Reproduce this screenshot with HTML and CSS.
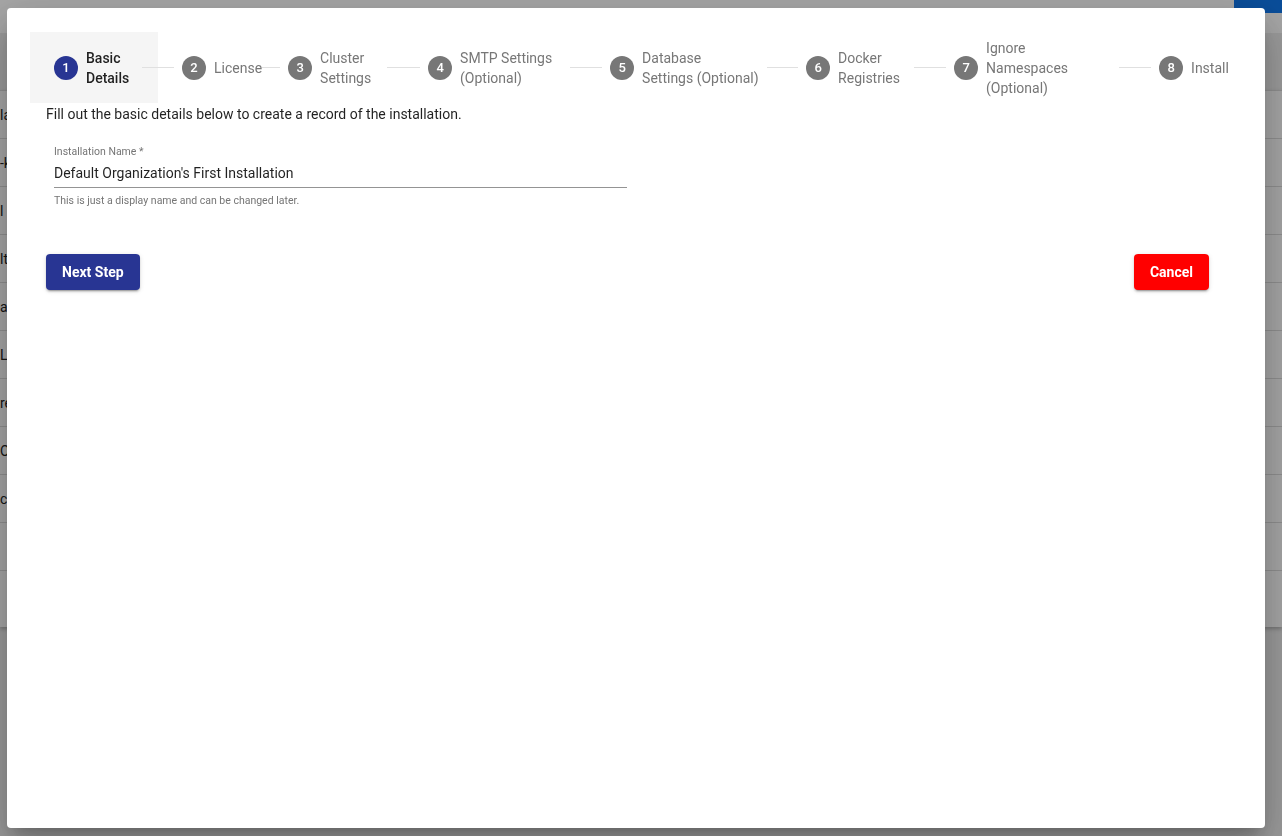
FILE: index.html
```html
<!DOCTYPE html>
<html lang="en">
<head>
<meta charset="utf-8">
<title>New Installation</title>
<link rel="stylesheet" href="styles.css">
</head>
<body>
<div class="page">
  <header class="appbar">
    <div class="appbar-btn"></div>
  </header>
  <div class="page-top"></div>
  <section class="panel">
    <div class="row">label</div>
    <div class="row">-k8s</div>
    <div class="row">l</div>
    <div class="row">lt</div>
    <div class="row">ap</div>
    <div class="row">Lo</div>
    <div class="row">re</div>
    <div class="row">Or</div>
    <div class="row">ce</div>
    <div class="row"></div>
    <div class="panel-footer"></div>
  </section>
</div>

<div class="backdrop"></div>

<div class="dialog" role="dialog">
  <div class="stepper">
    <div class="step step--active">
      <span class="step-icon step-icon--active">1</span>
      <span class="step-label step-label--active w-basic">Basic<br>Details</span>
    </div>
    <div class="connector"></div>
    <div class="step step--tight">
      <span class="step-icon">2</span>
      <span class="step-label">License</span>
    </div>
    <div class="connector connector--short"></div>
    <div class="step">
      <span class="step-icon">3</span>
      <span class="step-label w-cluster">Cluster<br>Settings</span>
    </div>
    <div class="connector connector--wide"></div>
    <div class="step">
      <span class="step-icon">4</span>
      <span class="step-label w-smtp">SMTP Settings<br>(Optional)</span>
    </div>
    <div class="connector"></div>
    <div class="step">
      <span class="step-icon">5</span>
      <span class="step-label w-db">Database<br>Settings (Optional)</span>
    </div>
    <div class="connector connector--narrow"></div>
    <div class="step">
      <span class="step-icon">6</span>
      <span class="step-label w-docker">Docker<br>Registries</span>
    </div>
    <div class="connector"></div>
    <div class="step">
      <span class="step-icon">7</span>
      <span class="step-label w-ns">Ignore<br>Namespaces<br>(Optional)</span>
    </div>
    <div class="connector"></div>
    <div class="step">
      <span class="step-icon">8</span>
      <span class="step-label">Install</span>
    </div>
  </div>

  <div class="content">
    <p class="desc">Fill out the basic details below to create a record of the installation.</p>

    <div class="field">
      <label class="field-label" for="iname">Installation Name *</label>
      <input class="field-input" id="iname" type="text" value="Default Organization's First Installation">
      <p class="field-help">This is just a display name and can be changed later.</p>
    </div>

    <div class="actions">
      <button class="btn btn--primary" type="button">Next Step</button>
      <button class="btn btn--danger" type="button">Cancel</button>
    </div>
  </div>
</div>
</body>
</html>
```

FILE: styles.css
```css
* {
  box-sizing: border-box;
}

html, body {
  margin: 0;
  padding: 0;
  height: 100%;
  overflow: hidden;
}

body {
  font-family: Roboto, "Liberation Sans", Arial, sans-serif;
  background: #eeeeee;
  color: rgba(0, 0, 0, 0.87);
}

/* ---------- background page ---------- */
.page {
  width: 100%;
}

.appbar {
  height: 33px;
  background: #ffffff;
  display: flex;
  justify-content: flex-end;
  align-items: flex-start;
}

.appbar-btn {
  width: 48px;
  height: 13px;
  background: #0f77ec;
}

.page-top {
  height: 57px;
}

.panel {
  background: #ffffff;
  box-shadow: 0 2px 4px rgba(0, 0, 0, 0.25);
}

.row {
  height: 48px;
  line-height: 48px;
  border-top: 1px solid #dcdcdc;
  font-size: 14px;
  color: #222;
  white-space: nowrap;
  overflow: hidden;
}

.panel-footer {
  height: 57px;
  border-top: 1px solid #dcdcdc;
}

.backdrop {
  position: fixed;
  inset: 0;
  background: rgba(0, 0, 0, 0.35);
}

/* ---------- dialog ---------- */
.dialog {
  position: fixed;
  left: 7px;
  top: 8px;
  width: 1258px;
  height: 820px;
  background: #ffffff;
  border-radius: 4px;
  box-shadow: 0 11px 15px -7px rgba(0, 0, 0, 0.2),
              0 24px 38px 3px rgba(0, 0, 0, 0.14),
              0 9px 46px 8px rgba(0, 0, 0, 0.12);
}

.stepper {
  display: flex;
  align-items: center;
  padding: 24px 0 0 23px;
}

.step {
  display: flex;
  align-items: center;
  gap: 8px;
  padding: 0 8px;
  flex: none;
}

.step--active {
  padding: 16px 24px 15px 24px;
  background: #f5f5f5;
  margin-right: -16px;
}

.step--tight {
  padding-right: 0;
}

.step-icon {
  width: 24px;
  height: 24px;
  border-radius: 50%;
  background: #777777;
  color: #ffffff;
  font-size: 13px;
  font-weight: 500;
  line-height: 24px;
  text-align: center;
  flex: none;
}

.step-icon--active {
  background: #283593;
}

.step-label {
  font-size: 14px;
  line-height: 20px;
  color: #777777;
  white-space: nowrap;
  flex: none;
}

.step-label--active {
  color: rgba(0, 0, 0, 0.87);
  font-weight: 500;
}

.w-basic { width: 48px; }
.w-cluster { width: 59px; }
.w-smtp { width: 102px; }
.w-db { width: 117px; }
.w-docker { width: 68px; }
.w-ns { width: 125px; }

.connector {
  width: 32px;
  height: 0;
  border-top: 1px solid #e0e0e0;
  flex: none;
}

.connector--short {
  width: 18px;
}

.connector--wide {
  width: 33px;
}

.connector--narrow {
  width: 31px;
}

/* ---------- content ---------- */
.content {
  padding: 0 56px 0 39px;
}

.desc {
  margin: 1px 0 0;
  font-size: 14px;
  line-height: 20px;
  color: rgba(0, 0, 0, 0.87);
}

.field {
  margin: 21px 0 0 8px;
  width: 573px;
}

.field-label {
  display: block;
  font-size: 10.5px;
  line-height: 13px;
  color: #757575;
}

.field-input {
  display: block;
  width: 100%;
  margin: 0;
  padding: 5px 0 4px;
  border: 0;
  border-bottom: 1px solid #949494;
  outline: none;
  font-family: inherit;
  font-size: 14px;
  line-height: 20px;
  height: 30px;
  color: rgba(0, 0, 0, 0.87);
  background: transparent;
}

.field-help {
  margin: 6px 0 0;
  font-size: 10.5px;
  line-height: 13px;
  color: #757575;
}

.actions {
  display: flex;
  justify-content: space-between;
  align-items: center;
  margin-top: 47px;
}

.btn {
  height: 36px;
  padding: 0 16px;
  border: 0;
  border-radius: 4px;
  font-family: inherit;
  font-size: 14px;
  font-weight: 700;
  color: #ffffff;
  cursor: pointer;
  box-shadow: 0 3px 1px -2px rgba(0, 0, 0, 0.2),
              0 2px 2px 0 rgba(0, 0, 0, 0.14),
              0 1px 5px 0 rgba(0, 0, 0, 0.12);
}

.btn--primary {
  background: #283593;
}

.btn--danger {
  background: #ff0000;
}
```
